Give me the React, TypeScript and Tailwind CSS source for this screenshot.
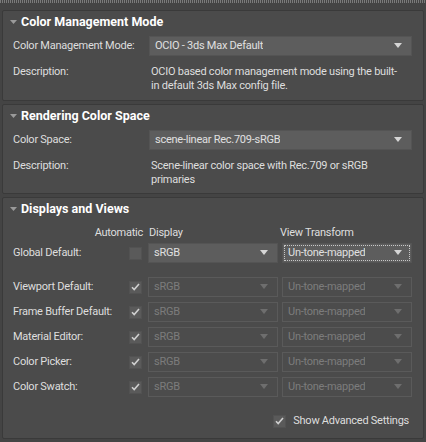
import React from 'react';

const font = { fontFamily: 'Roboto, "Liberation Sans", sans-serif' };

const Arrow = ({ disabled }: { disabled?: boolean }) => (
  <svg width="8" height="6" viewBox="0 0 8 6" className="shrink-0">
    <path d="M0 0h8L4 5z" fill={disabled ? '#6e6e6e' : '#d6d6d6'} />
  </svg>
);

const Dropdown = ({
  value,
  disabled,
  focused,
  className = '',
}: {
  value: string;
  disabled?: boolean;
  focused?: boolean;
  className?: string;
}) => (
  <div
    className={`h-[20px] flex items-center justify-between pl-[5px] pr-[9px] border ${
      disabled ? 'bg-[#4c4c4c] border-[#5a5a5a] text-[#7c7c7c]' : 'bg-[#5d5d5d] border-[#545454] text-[#e0e0e0]'
    } ${focused ? 'outline-1 outline-dotted outline-[#c8c8c8] -outline-offset-3' : ''} ${className}`}
  >
    <span className="truncate">{value}</span>
    <Arrow disabled={disabled} />
  </div>
);

const Check = ({ checked }: { checked?: boolean }) => (
  <div className="w-[13px] h-[13px] bg-[#5a5a5a] border border-[#525252] flex items-center justify-center">
    {checked && (
      <svg width="9" height="8" viewBox="0 0 9 8">
        <path d="M1 4.2l2.2 2.3L8 1" stroke="#d0d0d0" strokeWidth="1.6" fill="none" />
      </svg>
    )}
  </div>
);

const Panel = ({ title, children, className = '' }: { title: string; children: React.ReactNode; className?: string }) => (
  <div className={`mx-[2px] bg-[#4b4b4b] border border-[#3a3a3a] rounded-[2px] ${className}`}>
    <div className="h-[22px] flex items-center pl-[7px] gap-[4px]">
      <svg width="7" height="5" viewBox="0 0 7 5">
        <path d="M0 0h7L3.5 4z" fill="#9a9a9a" />
      </svg>
      <span className="text-[12.5px] font-bold text-white tracking-normal">{title}</span>
    </div>
    {children}
  </div>
);

const Row = ({ label, children }: { label: string; children: React.ReactNode }) => (
  <div className="flex items-center pl-[10px] pr-[11px]">
    <div className="w-[136px] shrink-0 whitespace-nowrap">{label}</div>
    <div className="flex-1">{children}</div>
  </div>
);

const Desc = ({ children }: { children: React.ReactNode }) => (
  <div className="flex pl-[10px] pr-[11px] leading-[14px]">
    <div className="w-[136px] shrink-0">Description:</div>
    <div className="flex-1 pl-[2px]">{children}</div>
  </div>
);

const rows = ['Viewport Default:', 'Frame Buffer Default:', 'Material Editor:', 'Color Picker:', 'Color Swatch:'];

export default function App() {
  return (
    <div
      className="w-[426px] h-[442px] bg-[#444444] text-[11px] tracking-[-0.25px] text-[#dedede] overflow-hidden"
      style={font}
    >
      <div className="h-[3px] bg-[repeating-linear-gradient(90deg,#7a7a7a_0_1px,#444444_1px_2px)]" />
      <Panel title="Color Management Mode" className="mt-[7px] pb-[7px]">
        <div className="mt-[3px]">
          <Row label="Color Management Mode:">
            <Dropdown value="OCIO - 3ds Max Default" />
          </Row>
        </div>
        <div className="mt-[9px]">
          <Desc>
            OCIO based color management mode using the built-
            <br />
            in default 3ds Max config file.
          </Desc>
        </div>
      </Panel>
      <Panel title="Rendering Color Space" className="mt-[3px] pb-[6px]">
        <div className="mt-[3px]">
          <Row label="Color Space:">
            <Dropdown value="scene-linear Rec.709-sRGB" />
          </Row>
        </div>
        <div className="mt-[9px]">
          <Desc>Scene-linear color space with Rec.709 or sRGB primaries</Desc>
        </div>
      </Panel>
      <Panel title="Displays and Views" className="mt-[3px] h-[242px]">
        <div className="flex items-center pl-[10px] pr-[11px] mt-[6px] leading-[14px]">
          <div className="w-[131px] shrink-0 text-right pr-[1px]">Automatic</div>
          <div className="w-[134px] shrink-0 pl-[5px]">Display</div>
          <div className="flex-1 pl-[2px]">View Transform</div>
        </div>
        <div className="flex items-center pl-[10px] pr-[11px] mt-[3px]">
          <div className="w-[116px] shrink-0 whitespace-nowrap">Global Default:</div>
          <div className="w-[19px] shrink-0">
            <Check />
          </div>
          <Dropdown value="sRGB" className="w-[130px]" />
          <Dropdown value="Un-tone-mapped" focused className="ml-[4px] flex-1" />
        </div>
        <div className="mt-[14px] flex flex-col gap-[5px]">
          {rows.map((r) => (
            <div key={r} className="flex items-center pl-[10px] pr-[11px]">
              <div className="w-[116px] shrink-0 whitespace-nowrap">{r}</div>
              <div className="w-[19px] shrink-0">
                <Check checked />
              </div>
              <Dropdown value="sRGB" disabled className="w-[130px]" />
              <Dropdown value="Un-tone-mapped" disabled className="ml-[4px] flex-1" />
            </div>
          ))}
        </div>
        <div className="flex items-center justify-end gap-[7px] pr-[14px] mt-[16px]">
          <Check checked />
          <span>Show Advanced Settings</span>
        </div>
      </Panel>
    </div>
  );
}
